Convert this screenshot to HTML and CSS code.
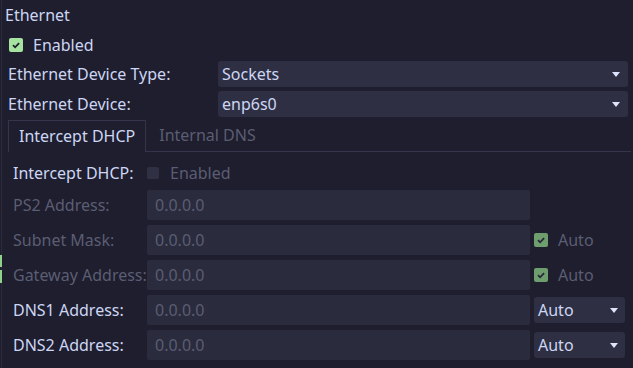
FILE: index.html
```html
<!DOCTYPE html>
<html>
<head>
    <title>Ethernet Settings</title>
    <link rel="stylesheet" href="styles.css">
</head>
<body>
    <div class="frame">
        <div class="group-title">Ethernet</div>

        <label class="check-row">
            <span class="check on"><svg viewBox="0 0 14 14"><path d="M4 7.2l2.1 2.1 4-4.2" /></svg></span>
            <span>Enabled</span>
        </label>

        <div class="device-grid">
            <span class="label">Ethernet Device Type:</span>
            <div class="combo"><span>Sockets</span><i class="arrow"></i></div>
            <span class="label">Ethernet Device:</span>
            <div class="combo"><span>enp6s0</span><i class="arrow"></i></div>
        </div>

        <div class="tabs">
            <div class="tab active">Intercept DHCP</div>
            <div class="tab">Internal DNS</div>
            <div class="tab-fill"></div>
        </div>

        <div class="pane">
            <span class="label">Intercept DHCP:</span>
            <label class="check-row inline muted">
                <span class="check off"></span>
                <span>Enabled</span>
            </label>
            <span></span>

            <span class="label muted">PS2 Address:</span>
            <div class="field">0.0.0.0</div>
            <span></span>

            <span class="label muted">Subnet Mask:</span>
            <div class="field">0.0.0.0</div>
            <label class="check-row inline muted">
                <span class="check dim"><svg viewBox="0 0 14 14"><path d="M4 7.2l2.1 2.1 4-4.2" /></svg></span>
                <span>Auto</span>
            </label>

            <span class="label muted">Gateway Address:</span>
            <div class="field">0.0.0.0</div>
            <label class="check-row inline muted">
                <span class="check dim"><svg viewBox="0 0 14 14"><path d="M4 7.2l2.1 2.1 4-4.2" /></svg></span>
                <span>Auto</span>
            </label>

            <span class="label">DNS1 Address:</span>
            <div class="field">0.0.0.0</div>
            <div class="combo small"><span>Auto</span><i class="arrow"></i></div>

            <span class="label">DNS2 Address:</span>
            <div class="field">0.0.0.0</div>
            <div class="combo small"><span>Auto</span><i class="arrow"></i></div>
        </div>
    </div>

    <div class="edge-mark top"></div>
    <div class="edge-mark bottom"></div>
</body>
</html>
```

FILE: styles.css
```css
body {
    margin: 0;
    padding: 0;
    background-color: #1e1e2e;
    color: #cdd6f4;
    font-family: 'Noto Sans', 'Open Sans', sans-serif;
    font-size: 16px;
    overflow: hidden;
}

.frame {
    margin-left: 1px;
    height: 368px;
    border-left: 1px solid #2a2a3b;
}

.group-title {
    height: 30px;
    line-height: 30px;
    padding-left: 3px;
}

.check-row {
    display: flex;
    align-items: center;
    gap: 10px;
    height: 30px;
    padding-left: 7px;
    white-space: nowrap;
}

.check-row.inline {
    padding-left: 0;
    height: auto;
}

.check {
    flex-shrink: 0;
    width: 14px;
    height: 14px;
    border-radius: 2px;
    display: flex;
    align-items: center;
    justify-content: center;
}

.check svg {
    width: 14px;
    height: 14px;
    fill: none;
    stroke: #1e1e2e;
    stroke-width: 1.8;
}

.check.on {
    background-color: #a6e3a1;
}

.check.dim {
    background-color: #6f9e6e;
}

.check.dim svg {
    stroke: #26283a;
}

.check.off {
    background-color: #2f3043;
    width: 12px;
    height: 12px;
    margin-right: 1px;
}

.device-grid {
    display: grid;
    grid-template-columns: 210px 410px;
    row-gap: 4px;
    padding-left: 6px;
    margin-top: 1px;
}

.label {
    display: flex;
    align-items: center;
    white-space: nowrap;
}

.muted {
    color: #5b5d72;
}

.combo {
    display: flex;
    align-items: center;
    justify-content: space-between;
    height: 26px;
    padding: 0 8px 0 4px;
    background-color: #2e2f42;
    border-radius: 3px;
}

.combo.small {
    padding-right: 7px;
}

.arrow {
    width: 0;
    height: 0;
    border-left: 4px solid transparent;
    border-right: 4px solid transparent;
    border-top: 5px solid #dde3fb;
}

.tabs {
    display: flex;
    margin-top: 3px;
    padding-left: 6px;
    height: 32px;
}

.tab {
    flex-shrink: 0;
    white-space: nowrap;
    padding: 0 12px 0 13px;
    line-height: 31px;
    color: #5b5d72;
    border-bottom: 1px solid #34354a;
}

.tab.active {
    color: #cdd6f4;
    border: 1px solid #34354a;
    border-bottom: none;
    padding: 0 10px;
}

.tab-fill {
    flex: 1;
    margin-right: 2px;
    border-bottom: 1px solid #34354a;
}

.pane {
    display: grid;
    grid-template-columns: 130px 383px 91px;
    column-gap: 4px;
    row-gap: 5px;
    grid-template-rows: 25px repeat(5, 30px);
    padding-left: 11px;
    padding-top: 8px;
}

.field {
    display: flex;
    align-items: center;
    padding-left: 8px;
    background-color: #2a2b3d;
    color: #5b5d72;
    border-radius: 2px;
}

.pane .combo {
    align-self: center;
}

.edge-mark {
    position: absolute;
    left: 0;
    width: 2px;
    background-color: #8fd18a;
}

.edge-mark.top {
    top: 255px;
    height: 12px;
}

.edge-mark.bottom {
    top: 270px;
    height: 13px;
}
```
